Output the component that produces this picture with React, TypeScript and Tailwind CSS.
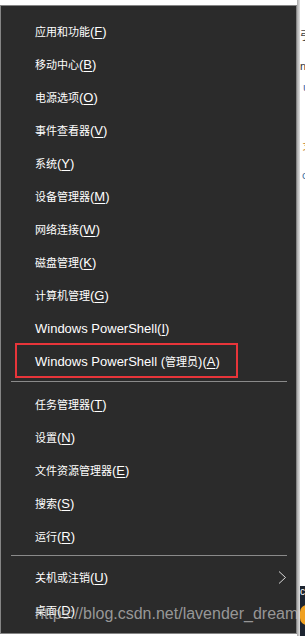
import type { ReactNode } from 'react';

type Item = { label: string; k: string };

const groupA: Item[] = [
  { label: '应用和功能', k: 'F' },
  { label: '移动中心', k: 'B' },
  { label: '电源选项', k: 'O' },
  { label: '事件查看器', k: 'V' },
  { label: '系统', k: 'Y' },
  { label: '设备管理器', k: 'M' },
  { label: '网络连接', k: 'W' },
  { label: '磁盘管理', k: 'K' },
  { label: '计算机管理', k: 'G' },
  { label: 'Windows PowerShell', k: 'I' },
  { label: 'Windows PowerShell (管理员)', k: 'A' },
];

const groupB: Item[] = [
  { label: '任务管理器', k: 'T' },
  { label: '设置', k: 'N' },
  { label: '文件资源管理器', k: 'E' },
  { label: '搜索', k: 'S' },
  { label: '运行', k: 'R' },
];

// 中文和西文分开排，字号不同
function Mixed({ text }: { text: string }) {
  const parts = text.split(/([\u4e00-\u9fff]+)/).filter(Boolean);
  return (
    <>
      {parts.map((p, i) =>
        /[\u4e00-\u9fff]/.test(p) ? (
          <span key={i} className="text-[11px] font-['Noto_Sans_CJK_SC',sans-serif]">{p}</span>
        ) : (
          <span key={i} className="text-[13px] font-['Liberation_Sans',Arial,sans-serif] whitespace-pre">{p}</span>
        )
      )}
    </>
  );
}

function Row({ item, children }: { item: Item; children?: ReactNode }) {
  return (
    <div className="relative h-[33px] flex items-center pl-[34px] pr-[10px] text-white">
      <Mixed text={item.label} />
      <span className="text-[13px] font-['Liberation_Sans',Arial,sans-serif]">
        (<span className="underline underline-offset-2 decoration-1">{item.k}</span>)
      </span>
      {children}
    </div>
  );
}

function Sep({ top, bottom }: { top: string; bottom: string }) {
  return <div className={`h-px bg-[#8a8a8a] mx-[10px] ${top} ${bottom}`} />;
}

export default function App() {
  return (
    <div className="w-[305px] h-[636px] bg-white flex overflow-hidden relative">
      {/* 菜单本体 */}
      <div className="mt-[5px] w-[297px] h-[629px] bg-[#2b2b2b] border border-[#858585] flex flex-col pt-[9px] shrink-0">
        {groupA.map((it, i) => (
          <Row key={it.k} item={it}>
            {i === groupA.length - 1 && (
              <div className="absolute left-[14px] top-[-2px] w-[223px] h-[35px] border-2 border-[#e8353a]" />
            )}
          </Row>
        ))}
        <div className="h-px bg-[#8a8a8a] ml-[10px] mr-[9px] mt-[3px] mb-[6px]" />
        {groupB.map((it) => (
          <Row key={it.k} item={it} />
        ))}
        <div className="h-px bg-[#8a8a8a] ml-[10px] mr-[9px] mt-[2px] mb-[5px]" />
        <Row item={{ label: '关机或注销', k: 'U' }}>
          <svg className="absolute left-[277px] top-[10px]" width="9" height="13" viewBox="0 0 9 13" fill="none">
            <polyline points="1,0.5 7.5,6.5 1,12.5" stroke="#d8d8d8" strokeWidth="1" />
          </svg>
        </Row>
        <Row item={{ label: '桌面', k: 'D' }} />
      </div>

      {/* 右侧露出的背景窗口 */}
      <div className="flex-1 flex">
        <div className="w-[3px] bg-gradient-to-r from-[#a8a8a8] to-[#e2e2e2]" />
        <div className="flex-1 flex flex-col text-[#333] text-[12px] font-['Noto_Sans_CJK_SC',sans-serif] leading-none">
          <span className="mt-[29px] text-[#444]">引</span>
          <span className="mt-[20px] text-[11px] font-['Liberation_Sans',sans-serif]">ng</span>
          <span className="mt-[10px] ml-[3px] text-[10px] text-[#3060a0]">u</span>
          <span className="mt-[50px] ml-[2px] text-[10px] text-[#c08020]">习</span>
          <span className="mt-[18px] ml-[2px] text-[10px] text-[#4070a0]">c</span>
          <div className="flex-1" />
          <div className="h-[50px] bg-[#1d2430] flex flex-col items-start">
            <span className="mt-[1px] text-[10px] text-white font-['Liberation_Sans',sans-serif]">c:4</span>
            <div className="mt-[8px] w-[14px] h-[20px] rounded-full bg-[#f0a020]" />
          </div>
        </div>
      </div>

      {/* 水印 */}
      <div className="absolute left-[35px] top-[604px] text-[16px] leading-[20px] text-[rgba(200,200,200,0.7)] font-['Liberation_Sans',Arial,sans-serif] whitespace-nowrap pointer-events-none">
        https://blog.csdn.net/lavender_dream
      </div>
    </div>
  );
}
